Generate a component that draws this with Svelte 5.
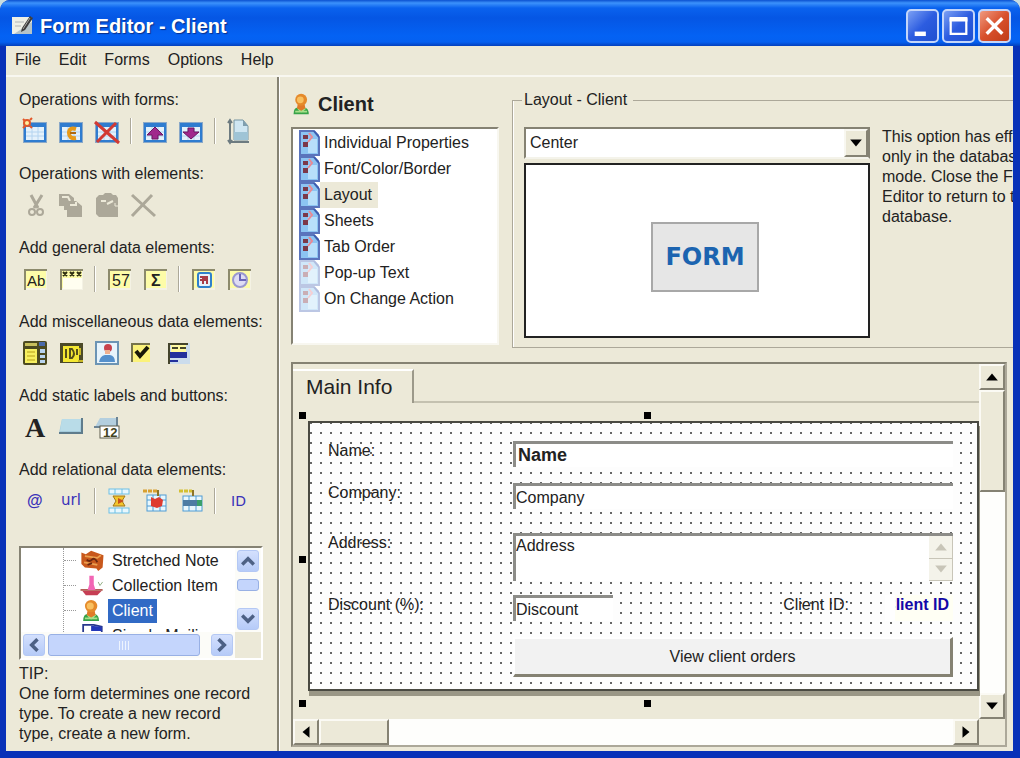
<script lang="ts">
  type Tool = { icon: string; label: string; disabled?: boolean } | null
  type Group = { title: string; tools: Tool[] }

  const menus = ['File', 'Edit', 'Forms', 'Options', 'Help']

  // null marks a separator
  const groups: Group[] = [
    {
      title: 'Operations with forms:',
      tools: [
        { icon: 'form-new', label: 'New form' },
        { icon: 'form-copy', label: 'Copy form' },
        { icon: 'form-delete', label: 'Delete form' },
        null,
        { icon: 'form-up', label: 'Export form' },
        { icon: 'form-down', label: 'Import form' },
        null,
        { icon: 'page', label: 'Page size' },
      ],
    },
    {
      title: 'Operations with elements:',
      tools: [
        { icon: 'cut', label: 'Cut', disabled: true },
        { icon: 'copy', label: 'Copy', disabled: true },
        { icon: 'paste', label: 'Paste', disabled: true },
        { icon: 'remove', label: 'Delete', disabled: true },
      ],
    },
    {
      title: 'Add general data elements:',
      tools: [
        { icon: 'text', label: 'Text' },
        { icon: 'password', label: 'Password' },
        null,
        { icon: 'number', label: 'Number' },
        { icon: 'sum', label: 'Formula' },
        null,
        { icon: 'date', label: 'Date' },
        { icon: 'time', label: 'Time' },
      ],
    },
    {
      title: 'Add miscellaneous data elements:',
      tools: [
        { icon: 'combo', label: 'Drop-down list' },
        { icon: 'rich', label: 'Rich text' },
        { icon: 'image', label: 'Image' },
        { icon: 'check', label: 'Check box' },
        { icon: 'list', label: 'List' },
      ],
    },
    {
      title: 'Add static labels and buttons:',
      tools: [
        { icon: 'label', label: 'Label' },
        { icon: 'button', label: 'Button' },
        { icon: 'tabs', label: 'Sheet' },
      ],
    },
    {
      title: 'Add relational data elements:',
      tools: [
        { icon: 'mail', label: 'E-mail' },
        { icon: 'url', label: 'Web address' },
        null,
        { icon: 'link-one', label: 'Link' },
        { icon: 'link-many', label: 'Link list' },
        { icon: 'link-field', label: 'Linked field' },
        null,
        { icon: 'id', label: 'Record ID' },
      ],
    },
  ]

  const tree = [
    { icon: 'note', label: 'Stretched Note' },
    { icon: 'item', label: 'Collection Item' },
    { icon: 'person', label: 'Client' },
    { icon: 'mailing', label: 'Simple Mailing' },
  ]

  const properties = [
    { label: 'Individual Properties' },
    { label: 'Font/Color/Border' },
    { label: 'Layout' },
    { label: 'Sheets' },
    { label: 'Tab Order' },
    { label: 'Pop-up Text', faded: true },
    { label: 'On Change Action', faded: true },
  ]

  const handles = ['nw', 'n', 'w', 'sw', 's']

  let selectedForm = $state('Client')
  let selectedProperty = $state('Layout')
  let layout = $state('Center')
</script>

{#snippet formWindow()}
  <rect x="1" y="4" width="24" height="21" fill="#8aa8c8" />
  <rect x="2" y="5" width="22" height="19" fill="#2f7cd0" />
  <rect x="4" y="9" width="18" height="13" fill="#e4f1fb" />
  <path d="M4 14h18M4 18h18M10 9v13M16 9v13" stroke="#b4d4f0" />
{/snippet}

{#snippet field()}
  <rect x="2" y="3" width="23" height="21" fill="#f4f2e4" />
  <rect x="4" y="5" width="20" height="17" fill="#fdfca8" />
  <path d="M3 24V4h22" fill="none" stroke="#8c8a6c" stroke-width="2" />
{/snippet}

{#snippet grid(y: number, h: number)}
  <rect x="3" {y} width="20" height={h} fill="#e8f7fd" stroke="#6cc0e6" />
  <path d="M9 {y}v{h}M16 {y}v{h}" stroke="#6cc0e6" />
{/snippet}

{#snippet personShape()}
  <path d="M3 25q0-8 5-8h8q5 1 5 8z" fill="#37a348" />
  <path d="M5 22h14M8 18l4 4 5-4" stroke="#a8e08a" stroke-width="2" fill="none" />
  <path d="M8 13h8l1 5-5 3-5-3z" fill="#e07a28" />
  <circle cx="12" cy="8" r="7" fill="#e58a2b" />
  <circle cx="11" cy="8" r="4" fill="#f9c060" />
{/snippet}

{#snippet icon(name: string)}
  <svg class="icon" viewBox="0 0 26 26" aria-hidden="true">
    {#if name === 'form-new'}
      {@render formWindow()}
      <circle cx="5" cy="5" r="3" fill="#fff0a0" stroke="#e2582a" stroke-width="2" />
      <path d="M1 1l2 2M10 0L8 2M1 10l2-2M8 8l2 2" stroke="#e2582a" stroke-width="2" />
    {:else if name === 'form-copy'}
      {@render formWindow()}
      <path d="M18 11q-7-2-7 4t7 5" fill="none" stroke="#e89a18" stroke-width="4" />
      <path d="M12 15h6" stroke="#b06a10" stroke-width="2" />
    {:else if name === 'form-delete'}
      {@render formWindow()}
      <path d="M1 4l24 21M22 5L3 24" stroke="#d23a34" stroke-width="3" />
    {:else if name === 'form-up'}
      {@render formWindow()}
      <path d="M13 9l8 8h-5v4h-6v-4H5z" fill="#a0288c" stroke="#6c1660" />
    {:else if name === 'form-down'}
      {@render formWindow()}
      <path d="M13 21l8-7h-5v-4h-6v4H5z" fill="#a0288c" stroke="#6c1660" />
    {:else if name === 'page'}
      <path d="M4 2v23M2 5l2-3 2 3M2 22l2 3 2-3M4 24h19" stroke="#6d7b80" stroke-width="2" fill="none" />
      <path d="M8 2h9l5 6v14H8z" fill="#cfe6f2" stroke="#7794a2" />
      <path d="M17 2v6h5z" fill="#7f9eae" />
      <path d="M8 14h14v8H8z" fill="#9fc4d6" />
    {:else if name === 'cut'}
      <path d="M9 3l7 13M20 3l-8 13" stroke="#aca899" stroke-width="3" fill="none" />
      <circle cx="10" cy="20" r="3" fill="none" stroke="#aca899" stroke-width="2" />
      <circle cx="18" cy="20" r="3" fill="none" stroke="#aca899" stroke-width="2" />
    {:else if name === 'copy'}
      <path d="M1 2h10l5 4v4h-5v8H6v-4H1z" fill="#aca899" />
      <path d="M4 5h6l2 4" stroke="#ece9d8" stroke-width="2" fill="none" />
      <path d="M9 9h9l6 5v11H9z" fill="#aca899" />
      <path d="M12 13h6v-3" stroke="#ece9d8" stroke-width="2" fill="none" />
    {:else if name === 'paste'}
      <path d="M5 3h4l2-2h6l2 2h3l2 3v19H5l-3-3V6z" fill="#aca899" />
      <path d="M7 9h5M13 12l6-3" stroke="#ece9d8" stroke-width="2" />
      <path d="M24 14h-3v-3" stroke="#ece9d8" fill="none" />
    {:else if name === 'remove'}
      <path d="M2 3l23 21M22 3L2 24" stroke="#aca899" stroke-width="3" />
    {:else if name === 'text'}
      {@render field()}
      <text x="5" y="20" font-size="15" fill="#222">Ab</text>
    {:else if name === 'password'}
      {@render field()}
      <rect x="5" y="12" width="19" height="11" fill="#fffef0" />
      <path
        d="M5 6l4 4M9 6l-4 4M12 6l4 4M16 6l-4 4M19 6l4 4M23 6l-4 4"
        stroke="#2c2c10"
        stroke-width="2"
      />
    {:else if name === 'number'}
      {@render field()}
      <text x="6" y="20" font-size="16" fill="#222">57</text>
    {:else if name === 'sum'}
      {@render field()}
      <text x="9" y="20" font-size="16" font-weight="bold" fill="#222">Σ</text>
    {:else if name === 'date'}
      {@render field()}
      <rect x="8" y="7" width="13" height="14" rx="2" fill="#e6f2fb" stroke="#2f80cc" stroke-width="2" />
      <path d="M10 11h3v7M10 14h3M17 10v8M15 10v5" stroke="#a83c48" stroke-width="2" fill="none" />
    {:else if name === 'time'}
      {@render field()}
      <circle cx="14" cy="14" r="7" fill="#dedcf4" stroke="#9a98d0" stroke-width="2" />
      <path d="M14 8v6h6" stroke="#6a66b8" stroke-width="2" fill="none" />
    {:else if name === 'combo'}
      <rect x="1" y="1" width="24" height="24" rx="2" fill="#4c4a20" />
      <rect x="3" y="3" width="12" height="3" fill="#c8c05c" />
      <rect x="3" y="9" width="12" height="14" fill="#f7f060" />
      <path d="M5 12h8M5 16h8M5 20h8" stroke="#b8a018" />
      <rect x="17" y="2" width="6" height="4" fill="#4a6aa8" />
      <path d="M18 9h5v4h-5zM18 15h5v3h-5zM18 20h5v3h-5z" fill="#b9d4ef" />
    {:else if name === 'rich'}
      <rect x="2" y="3" width="23" height="20" fill="#4c4a28" />
      <rect x="5" y="6" width="16" height="16" fill="#f4e832" />
      <path d="M8 9v9M12 9v9h2q4-4 0-9zM19 9v6" stroke="#55501a" stroke-width="2" fill="none" />
      <path d="M22 8v7M20 21h5" stroke="#c8b828" stroke-width="2" />
    {:else if name === 'image'}
      <rect x="2" y="2" width="22" height="22" fill="#e8f4fc" stroke="#6c94b4" stroke-width="2" />
      <path d="M5 22q1-6 6-7h5q5 1 5 7z" fill="#5590cc" />
      <circle cx="14" cy="8" r="4" fill="#c8424c" />
      <path d="M11 10h5v4h-5z" fill="#f0b090" />
    {:else if name === 'check'}
      <rect x="1" y="4" width="19" height="18" fill="#fbf27a" />
      <path d="M2 22V4h18" fill="none" stroke="#77744c" stroke-width="2" />
      <path d="M6 11l4 5 8-9" fill="none" stroke="#181808" stroke-width="4" />
    {:else if name === 'list'}
      <rect x="3" y="3" width="21" height="21" fill="#cbdcec" />
      <rect x="5" y="4" width="15" height="8" fill="#fdf8a0" />
      <path d="M3 24V4h19" fill="none" stroke="#44442c" stroke-width="2" />
      <path d="M6 8h6M14 8h6" stroke="#44442c" stroke-width="2" />
      <rect x="4" y="12" width="17" height="6" fill="#22309c" />
      <path d="M4 21h8" stroke="#22309c" stroke-width="2" />
    {:else if name === 'label'}
      <text x="3" y="23" font-size="28" font-weight="bold" class="serif" fill="#222">A</text>
    {:else if name === 'button'}
      <path d="M4 5h20v14H1z" fill="#a4cbdc" />
      <path d="M4 5h19l-1 12H2z" fill="#b9dce8" />
      <path d="M24 4v15H1" fill="none" stroke="#5f7c8c" stroke-width="2" />
    {:else if name === 'tabs'}
      <path d="M6 4h16v9H1z" fill="#b4cfdf" />
      <path d="M23 3v9M0 13h8" stroke="#6c8494" stroke-width="2" />
      <rect x="6" y="12" width="19" height="12" fill="#fff" stroke="#5c5c4c" />
      <text x="9" y="23" font-size="13" font-weight="bold" fill="#444420">12</text>
    {:else if name === 'mail'}
      <text x="5" y="18" font-size="16" font-weight="bold" fill="#3a32b8">@</text>
    {:else if name === 'url'}
      <text x="3" y="17" font-size="15" class="wide" fill="#3a32b8">url</text>
    {:else if name === 'id'}
      <text x="5" y="18" font-size="14" class="wide" fill="#3a32b8">ID</text>
    {:else if name === 'link-one'}
      {@render grid(1, 5)}
      {@render grid(20, 5)}
      <path d="M7 8h12l-3 5 3 5H7l3-5z" fill="#f4c62c" stroke="#a07818" />
      <path d="M12 10l6 3-6 3z" fill="#c8501c" />
    {:else if name === 'link-many'}
      <path d="M1 3h14" stroke="#d8a030" stroke-width="3" stroke-dasharray="4 1" />
      <rect x="5" y="7" width="19" height="16" fill="#e8f7fd" stroke="#4f9cd4" />
      <path d="M5 12h19M5 18h19M11 7v16M18 7v16" stroke="#4f9cd4" />
      <path d="M9 9l4 2 4-2 4 3-1 6-5 2-6-2z" fill="#de3c30" />
      <path d="M16 2v6" stroke="#8c7428" stroke-width="2" />
    {:else if name === 'link-field'}
      <path d="M1 3h13" stroke="#d4c030" stroke-width="3" stroke-dasharray="4 1" />
      <rect x="5" y="8" width="19" height="15" fill="#e8f7fd" stroke="#4f9cd4" />
      <path d="M11 8v15M18 8v15" stroke="#4f9cd4" />
      <rect x="5" y="12" width="19" height="6" fill="#4c7ca4" />
      <path d="M19 12h5v6h-5z" fill="#3aa06c" />
      <path d="M15 2v6" stroke="#8c7428" stroke-width="2" />
    {:else if name === 'note'}
      <path d="M1 4l5 2 6-4 14 5-1 14-5 4-2-3-13-1-4-4z" fill="#c8581c" />
      <path d="M5 8l14 2 4-3M4 15l15 3" stroke="#eba050" stroke-width="2" fill="none" />
      <path d="M7 12q3 3 6 0t6 3M8 18l5-2" stroke="#6c2810" stroke-width="2" fill="none" />
    {:else if name === 'item'}
      <path d="M2 19h22l-5 5H6z" fill="#c63e54" />
      <path d="M0 18h25" stroke="#b05a50" stroke-width="2" />
      <path d="M10 2h5v10l2 6H8l2-6z" fill="#f266b4" />
      <path d="M20 9l2 4 3-4" stroke="#88a878" fill="none" />
    {:else if name === 'person'}
      {@render personShape()}
    {:else if name === 'mailing'}
      <path d="M3 1h12l9 2v22H3z" fill="#fff" stroke="#28388c" stroke-width="2" />
      <path d="M12 2l12 1v5H12z" fill="#2438b8" />
    {/if}
  </svg>
{/snippet}

{#snippet arrow(dir: string)}
  <svg class="arrow {dir}" viewBox="0 0 12 12" aria-hidden="true">
    <path d="M1 9h10L6 3z" fill="currentColor" />
  </svg>
{/snippet}

{#snippet chevron(dir: string)}
  <svg class="arrow {dir}" viewBox="0 0 12 12" aria-hidden="true">
    <path d="M1 9l5-5 5 5" fill="none" stroke="#4d6185" stroke-width="3" />
  </svg>
{/snippet}

<div class="window">
  <header class="titlebar">
    <svg class="app-icon" viewBox="0 0 22 20" aria-hidden="true">
      <rect x="0" y="1" width="20" height="17" fill="#eef0e6" />
      <path d="M2 18h18V6z" fill="#b6c4c8" />
      <path d="M3 6h9M3 10h6" stroke="#b0b4b4" />
      <path d="M18 0l3 2-8 12-4 2 1-4z" fill="#3c3c3c" />
      <path d="M18 2L11 13" stroke="#a8a8a0" />
    </svg>
    <h1>Form Editor - Client</h1>
    <div class="caption-buttons">
      <button aria-label="Minimize">
        <svg viewBox="0 0 26 26"><rect x="6" y="18" width="10" height="4" fill="#fff" /></svg>
      </button>
      <button aria-label="Maximize">
        <svg viewBox="0 0 26 26">
          <path d="M6 7h14v13H6z" fill="none" stroke="#fff" stroke-width="2" />
          <path d="M5 7h16" stroke="#fff" stroke-width="4" />
        </svg>
      </button>
      <button class="close" aria-label="Close">
        <svg viewBox="0 0 26 26"><path d="M6 6l14 14M20 6L6 20" stroke="#fff" stroke-width="3" /></svg>
      </button>
    </div>
  </header>

  <div class="client">
    <nav class="menubar">
      {#each menus as menu}
        <button>{menu}</button>
      {/each}
    </nav>

    <div class="workspace">
      <aside>
        {#each groups as group}
          <section class="group">
            <h2>{group.title}</h2>
            <div class="toolbar">
              {#each group.tools as tool}
                {#if tool}
                  <button aria-label={tool.label} disabled={tool.disabled}>{@render icon(tool.icon)}</button>
                {:else}
                  <span class="separator"></span>
                {/if}
              {/each}
            </div>
          </section>
        {/each}

        <div class="tree">
          <ul>
            {#each tree as node}
              <li>
                {@render icon(node.icon)}
                <button
                  class:selected={selectedForm === node.label}
                  onclick={() => (selectedForm = node.label)}>{node.label}</button
                >
              </li>
            {/each}
          </ul>
          <div class="xp-bar vertical">
            <button aria-label="Scroll up">{@render chevron('up')}</button>
            <span class="thumb"></span>
            <button aria-label="Scroll down">{@render chevron('down')}</button>
          </div>
          <div class="xp-bar horizontal">
            <button aria-label="Scroll left">{@render chevron('left')}</button>
            <span class="thumb"><i></i><i></i><i></i><i></i></span>
            <button aria-label="Scroll right">{@render chevron('right')}</button>
          </div>
        </div>

        <p class="tip">TIP:<br />One form determines one record type. To create a new record type, create a new form.</p>
      </aside>

      <main>
        <div class="upper">
          <section class="properties">
            <h2>{@render icon('person')}Client</h2>
            <ul>
              {#each properties as property}
                <li>
                  <svg class="sheet-icon" class:faded={property.faded} viewBox="0 0 21 26" aria-hidden="true">
                    <path d="M1 1h14l5 6v18H1z" fill="#8cc4f2" stroke="#5a74bc" stroke-width="2" />
                    <path d="M9 9h9v14H9z" fill="#b8dffa" />
                    <path d="M14 1l6 7V5l-4-4z" fill="#3c5cae" />
                    <path d="M4 5h5v4H4zM4 12h5v5H4z" fill="#7c3848" />
                    <path d="M10 3l3 4-4 5" fill="none" stroke="#e88a94" stroke-width="2" />
                  </svg>
                  <button
                    class:selected={selectedProperty === property.label}
                    onclick={() => (selectedProperty = property.label)}>{property.label}</button
                  >
                </li>
              {/each}
            </ul>
          </section>

          <fieldset>
            <legend>Layout - Client</legend>
            <div class="layout-choice">
              <div class="select">
                <select aria-label="Layout" bind:value={layout}>
                  <option>Center</option>
                  <option>Stretch</option>
                </select>
                <span class="drop">{@render arrow('down')}</span>
              </div>
              <div class="preview"><div class="preview-form">FORM</div></div>
            </div>
            <p>
              This option has effect<br />only in the database<br />mode. Close the Form<br />Editor to return to the<br />database.
            </p>
          </fieldset>
        </div>

        <section class="designer">
          <div class="surface">
            <div class="tabs">
              <button class="tab">Main Info</button>
            </div>
            <div class="frame">
              {#each handles as handle}
                <span class="handle {handle}"></span>
              {/each}
              <form class="canvas">
                <label for="name">Name:</label>
                <input id="name" class="bold" value="Name" />

                <label for="company">Company:</label>
                <input id="company" value="Company" />

                <label for="address">Address:</label>
                <div class="memo">
                  <textarea id="address" value="Address"></textarea>
                  <div class="memo-bar">
                    <button type="button" disabled aria-label="Up">{@render arrow('up')}</button>
                    <button type="button" disabled aria-label="Down">{@render arrow('down')}</button>
                  </div>
                </div>

                <label for="discount">Discount (%):</label>
                <div class="discount-row">
                  <input id="discount" value="Discount" />
                  <label for="client-id">Client ID:</label>
                  <output id="client-id">Client ID</output>
                </div>

                <button type="button" class="orders">View client orders</button>
              </form>
            </div>
          </div>

          <div class="bar vertical">
            <button aria-label="Scroll up">{@render arrow('up')}</button>
            <span class="thumb"></span>
            <span class="track"></span>
            <button aria-label="Scroll down">{@render arrow('down')}</button>
          </div>
          <div class="bar horizontal">
            <button aria-label="Scroll left">{@render arrow('left')}</button>
            <span class="thumb"></span>
            <span class="track"></span>
            <button aria-label="Scroll right">{@render arrow('right')}</button>
          </div>
        </section>
      </main>
    </div>
  </div>
</div>

<style>
  :global(body) {
    margin: 0;
    background: #c8dce0;
  }

  .window {
    --face: #ece9d8;
    --shade: #858273;
    min-height: 100vh;
    box-sizing: border-box;
    display: flex;
    flex-direction: column;
    padding: 0 7px 7px 6px;
    border-radius: 10px 10px 0 0;
    background: #0831b8;
    color: #222;
    font-family: 'Liberation Sans', Arial, sans-serif;
    font-size: 16px;
    line-height: 20px;
    overflow: hidden;
  }

  button,
  input,
  select,
  textarea {
    font: inherit;
    color: inherit;
    margin: 0;
    padding: 0;
    border: none;
    background: none;
    border-radius: 0;
    box-sizing: border-box;
  }

  h1,
  h2,
  p,
  ul {
    margin: 0;
    padding: 0;
    list-style: none;
  }

  h2 {
    font-size: 16px;
    font-weight: 400;
  }

  .icon {
    display: block;
    width: 26px;
    height: 26px;
    flex-shrink: 0;
    overflow: visible;
  }

  .serif {
    font-family: 'Liberation Serif', serif;
  }

  .wide {
    font-family: 'DejaVu Sans', sans-serif;
  }

  .titlebar {
    display: flex;
    align-items: center;
    height: 46px;
    box-sizing: border-box;
    margin: 0 -7px 0 -6px;
    padding: 6px 9px 0 12px;
    background: linear-gradient(#0a50d0 0, #3c92fb 3px, #0a62ee 8px, #0556e4 18px, #0462f4 36px, #0560f0 42px, #0440bc);
  }

  .app-icon {
    width: 22px;
    height: 20px;
  }

  h1 {
    flex: 1;
    margin-left: 6px;
    font-size: 20px;
    line-height: 24px;
    color: #fff;
    text-shadow: 1px 1px 1px #0a2f88;
  }

  .caption-buttons {
    display: flex;
    gap: 3px;
  }

  .caption-buttons button {
    width: 33px;
    height: 34px;
    border: 2px solid #c4d6fa;
    border-radius: 5px;
    background: linear-gradient(135deg, #7ba0f4, #2c5ce0 50%, #1f50d0);
  }

  .caption-buttons .close {
    background: linear-gradient(135deg, #f09a80, #d8502c 50%, #c03c18);
  }

  .caption-buttons svg {
    display: block;
    width: 29px;
    height: 30px;
  }

  .client {
    flex: 1;
    display: flex;
    flex-direction: column;
    background: var(--face);
  }

  .menubar {
    display: flex;
    gap: 18px;
    padding: 4px 9px 5px;
    border-bottom: 2px solid #f8f7f0;
  }

  .workspace {
    flex: 1;
    display: flex;
  }

  aside {
    flex: none;
    width: 273px;
    box-sizing: border-box;
    padding: 13px 14px 0 13px;
    border-right: 2px solid var(--shade);
  }

  .group {
    padding-bottom: 20px;
  }

  .group h2 {
    white-space: nowrap;
  }

  .toolbar {
    display: flex;
    margin: 8px 0 0 -2px;
  }

  .toolbar button {
    width: 36px;
    display: flex;
    justify-content: center;
  }

  .separator {
    width: 2px;
    margin: 0 5px;
    box-sizing: border-box;
    border-left: 1px solid #aca899;
    border-right: 1px solid #fff;
  }

  .tree {
    display: grid;
    grid-template: 84px 26px / 1fr 26px;
    margin-top: 12px;
    border: 2px solid var(--shade);
    border-right-color: #fff;
    border-bottom-color: #fff;
  }

  .tree ul {
    margin-left: 42px;
    border-left: 1px dotted #999;
    background: #fff;
    overflow: hidden;
    box-shadow: -42px 0 #fff;
  }

  .tree li {
    display: flex;
    align-items: center;
    gap: 3px;
    height: 25px;
  }

  .tree li::before {
    content: '';
    width: 12px;
    border-top: 1px dotted #999;
  }

  .tree .icon {
    height: 23px;
  }

  .tree li button {
    padding: 2px 4px;
    white-space: nowrap;
  }

  .tree li .selected {
    background: #316ac5;
    color: #fff;
  }

  .xp-bar {
    display: flex;
    align-items: center;
    gap: 3px;
    background: #fcfcf8;
  }

  .xp-bar button {
    flex: none;
    width: 22px;
    height: 22px;
    display: grid;
    place-items: center;
    border: 1px solid #b4c8f4;
    border-radius: 3px;
    background: linear-gradient(#d4e0fd, #b6cbf8);
  }

  .xp-bar.vertical {
    flex-direction: column;
    padding: 2px 0;
  }

  .xp-bar .thumb {
    display: flex;
    justify-content: center;
    align-items: center;
    gap: 2px;
    border: 1px solid #98b0e4;
    border-radius: 3px;
    background: #c4d5fc;
    box-sizing: border-box;
  }

  .xp-bar .thumb i {
    width: 1px;
    height: 9px;
    background: #eef4fe;
  }

  .xp-bar.vertical .thumb {
    width: 22px;
    height: 12px;
    margin-top: 4px;
  }

  .xp-bar.vertical button:last-child {
    margin-top: auto;
  }

  .xp-bar.horizontal {
    padding: 0 2px;
  }

  .xp-bar.horizontal .thumb {
    flex: 1;
    height: 22px;
    margin-right: 8px;
  }

  .tip {
    margin-top: 4px;
    padding: 0 8px 6px 0;
  }

  .arrow {
    display: block;
    width: 14px;
    height: 14px;
  }

  .down {
    rotate: 180deg;
  }

  .left {
    rotate: -90deg;
  }

  .right {
    rotate: 90deg;
  }

  main {
    flex: 1;
    min-width: 0;
    display: flex;
    flex-direction: column;
    padding: 13px 6px 4px 11px;
    border-left: 1px solid #fff;
  }

  .upper {
    display: flex;
    gap: 13px;
    margin-right: -6px;
    overflow: hidden;
  }

  .properties {
    flex: none;
    width: 208px;
    display: flex;
    flex-direction: column;
  }

  .properties h2 {
    display: flex;
    align-items: center;
    gap: 5px;
    height: 28px;
    margin-bottom: 9px;
    font-size: 20px;
    font-weight: 700;
  }

  .properties h2 .icon {
    width: 22px;
    height: 22px;
  }

  .properties ul {
    flex: 1;
    margin-bottom: 3px;
    padding: 1px 0 0 6px;
    border: 2px solid var(--shade);
    border-right-color: #f8f7f0;
    border-bottom-color: #f8f7f0;
    background: #fff;
  }

  .properties li {
    display: flex;
    align-items: center;
    height: 26px;
  }

  .properties li button {
    padding: 3px 6px 3px 4px;
  }

  .properties li .selected {
    background: var(--face);
  }

  .sheet-icon {
    width: 21px;
    height: 26px;
  }

  .faded {
    opacity: 0.4;
  }

  fieldset {
    flex: none;
    width: 560px;
    box-sizing: border-box;
    display: flex;
    gap: 12px;
    margin: 0;
    padding: 17px 11px 9px;
    border: 1px solid #aca899;
    box-shadow: inset 1px 0 #fff, 0 1px #fff;
  }

  legend {
    padding: 0 6px 0 2px;
    margin-left: -2px;
  }

  .layout-choice {
    width: 346px;
  }

  .select {
    position: relative;
    border: 2px solid var(--shade);
    border-bottom-color: #f4f3ea;
    background: #fff;
  }

  .select select {
    display: block;
    width: 100%;
    height: 28px;
    padding: 0 4px;
    appearance: none;
  }

  .drop {
    position: absolute;
    inset: 0 0 0 auto;
    width: 24px;
    display: grid;
    place-items: center;
    box-sizing: border-box;
    border: 2px solid #f8f7f0;
    border-right-color: var(--shade);
    border-bottom-color: var(--shade);
    background: var(--face);
    color: #000;
    pointer-events: none;
  }

  .preview {
    display: grid;
    place-items: center;
    height: 159px;
    margin-top: 4px;
    padding: 12px 0 0 16px;
    border: 2px solid #222;
    background: #fff;
  }

  .preview-form {
    display: grid;
    place-items: center;
    width: 104px;
    height: 66px;
    border: 2px solid #a8a8a8;
    background: #e6e6e6;
    color: #1c64b0;
    font-family: 'DejaVu Sans', sans-serif;
    font-size: 24px;
    font-weight: 700;
  }

  fieldset p {
    white-space: nowrap;
  }

  .designer {
    flex: 1;
    display: grid;
    grid-template: 1fr 26px / 1fr 26px;
    margin-top: 14px;
    border: 2px solid var(--shade);
    border-right-color: #aca899;
    border-bottom-color: #aca899;
  }

  .surface {
    padding: 5px 0 25px;
  }

  .tabs {
    display: flex;
    border-bottom: 2px solid #c4c1b0;
  }

  .tab {
    padding: 4px 20px 4px 13px;
    margin-bottom: -2px;
    border-top: 2px solid #fff;
    border-right: 2px solid #9c998a;
    background: var(--face);
    font-size: 21px;
    line-height: 24px;
  }

  .frame {
    position: relative;
    margin: 18px 0 0 15px;
  }

  .canvas {
    display: grid;
    grid-template: 26px 34px 46px 26px 40px / 185px 1fr;
    row-gap: 16px;
    padding: 18px 24px 12px 18px;
    border: 2px solid #4a4a42;
    box-shadow: 1px 5px #9a9786;
    background: radial-gradient(circle, #666 1px, transparent 1px) 6px 5px / 10px 10px #fdfdfd;
    align-items: start;
  }

  .canvas input,
  .memo {
    width: 100%;
    height: 26px;
    box-sizing: border-box;
    border: 3px solid #8c8c88;
    border-width: 3px 0 0 3px;
    background: #fff;
  }

  .canvas .bold {
    padding-left: 2px;
    font-size: 18px;
    font-weight: 700;
  }

  .canvas .memo {
    display: flex;
    height: 48px;
  }

  .memo textarea {
    flex: 1;
    resize: none;
    overflow: hidden;
  }

  .memo-bar {
    display: grid;
    width: 24px;
    background: #f4f3ea;
  }

  .memo-bar button {
    display: grid;
    place-items: center;
    border-bottom: 1px solid #c8c5b8;
    border-right: 1px solid #c8c5b8;
    color: #c8c5b8;
  }

  .discount-row {
    display: flex;
    align-items: flex-start;
  }

  .discount-row input {
    width: 100px;
    margin-right: auto;
  }

  .discount-row output {
    display: flex;
    justify-content: flex-end;
    width: 54px;
    height: 26px;
    margin-left: 36px;
    padding-right: 4px;
    border-left: 10px solid #fff;
    background: #fffff4;
    color: #1408a8;
    font-weight: 700;
    white-space: nowrap;
    overflow: hidden;
  }

  .canvas .orders {
    grid-column: 2;
    height: 40px;
    border: 2px solid #fff;
    border-right: 3px solid var(--shade);
    border-bottom: 3px solid var(--shade);
    background: #f2f2f2;
  }

  .handle {
    position: absolute;
    width: 7px;
    height: 7px;
    background: #000;
  }

  .nw {
    left: -9px;
    top: -9px;
  }

  .n {
    left: 50%;
    top: -9px;
  }

  .w {
    left: -9px;
    top: 50%;
  }

  .sw {
    left: -9px;
    bottom: -16px;
  }

  .s {
    left: 50%;
    bottom: -16px;
  }

  .bar {
    display: flex;
  }

  .bar.vertical {
    flex-direction: column;
  }

  .bar button,
  .bar .thumb {
    flex: none;
    display: grid;
    place-items: center;
    width: 26px;
    height: 26px;
    box-sizing: border-box;
    border: 2px solid #fbfaf4;
    border-right-color: var(--shade);
    border-bottom-color: var(--shade);
    background: var(--face);
    color: #000;
  }

  .bar.vertical .thumb {
    height: 102px;
  }

  .bar.horizontal .thumb {
    width: 70px;
  }

  .track {
    flex: 1;
    background: #fefefc;
  }
</style>
